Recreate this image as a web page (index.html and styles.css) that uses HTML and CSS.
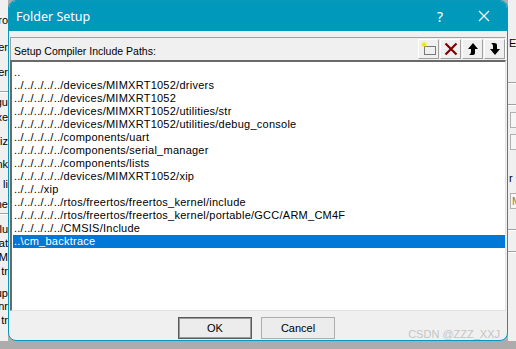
FILE: index.html
```html
<!DOCTYPE html>
<html lang="en">
<head>
  <meta charset="UTF-8">
  <title>Folder Setup</title>
  <link rel="stylesheet" href="styles.css">
</head>
<body>
  <div class="desktop">
    <div class="stage">
      <!-- window behind the dialog, left edge -->
      <div class="behind behind-left">
        <div class="frag" style="margin-top:14px">ro</div>
        <div class="frag" style="margin-top:14px">er</div>
        <div class="frag" style="margin-top:12px">er</div>
        <div class="rule" style="margin-top:12px"></div>
        <div class="frag" style="margin-top:3px">gu</div>
        <div class="frag" style="margin-top:2px">xe</div>
        <div class="frag" style="margin-top:11px">iz</div>
        <div class="frag" style="margin-top:10px">nk</div>
        <div class="frag" style="margin-top:7px">li</div>
        <div class="frag" style="margin-top:7px">ne</div>
        <div class="rule" style="margin-top:2px"></div>
        <div class="frag" style="margin-top:8px">lu</div>
        <div class="frag" style="margin-top:1px">at</div>
        <div class="frag" style="margin-top:1px">M</div>
        <div class="frag" style="margin-top:1px">tr</div>
        <div class="frag" style="margin-top:9px">up</div>
        <div class="frag" style="margin-top:0">nr</div>
        <div class="frag" style="margin-top:1px">tr</div>
      </div>

      <div class="dialog">
        <div class="titlebar">
          <span class="title">Folder Setup</span>
          <span class="help">?</span>
          <span class="close">
            <svg width="12" height="12" viewBox="0 0 12 12"><path d="M1 1 L11 11 M11 1 L1 11" stroke="#fff" stroke-width="1.2"/></svg>
          </span>
        </div>

        <div class="content">
          <div class="list-head">
            <span class="label">Setup Compiler Include Paths:</span>
            <div class="tools">
              <button class="tool" title="New">
                <svg width="16" height="14" viewBox="0 0 16 14">
                  <rect x="3.5" y="4.5" width="11" height="8" fill="none" stroke="#000" stroke-dasharray="1 1"/>
                  <path d="M3 0 V5 M0.5 2.5 H5.5 M1 0.5 L5 4.5 M5 0.5 L1 4.5" stroke="#f0e000" stroke-width="1"/>
                </svg>
              </button>
              <button class="tool" title="Delete">
                <svg width="14" height="14" viewBox="0 0 14 14"><path d="M1.5 1.5 L12.5 12.5 M12.5 1.5 L1.5 12.5" stroke="#800000" stroke-width="2.2"/></svg>
              </button>
              <button class="tool" title="Move Up">
                <svg width="12" height="14" viewBox="0 0 12 14"><path d="M6 1 L11 7 H8 V11 Q8 13 5 13 H2 Q4 12 4 10 V7 H1 Z" fill="#000"/></svg>
              </button>
              <button class="tool" title="Move Down">
                <svg width="12" height="14" viewBox="0 0 12 14"><path d="M6 13 L11 7 H8 V3 Q8 1 5 1 H2 Q4 2 4 4 V7 H1 Z" fill="#000"/></svg>
              </button>
            </div>
          </div>

          <ul class="paths">
            <li>..</li>
            <li>../../../../../devices/MIMXRT1052/drivers</li>
            <li>../../../../../devices/MIMXRT1052</li>
            <li>../../../../../devices/MIMXRT1052/utilities/str</li>
            <li>../../../../../devices/MIMXRT1052/utilities/debug_console</li>
            <li>../../../../../components/uart</li>
            <li>../../../../../components/serial_manager</li>
            <li>../../../../../components/lists</li>
            <li>../../../../../devices/MIMXRT1052/xip</li>
            <li>../../../xip</li>
            <li>../../../../../rtos/freertos/freertos_kernel/include</li>
            <li>../../../../../rtos/freertos/freertos_kernel/portable/GCC/ARM_CM4F</li>
            <li>../../../../../CMSIS/Include</li>
            <li class="selected">..\cm_backtrace</li>
          </ul>

          <div class="actions">
            <button class="btn default">OK</button>
            <button class="btn">Cancel</button>
            <span class="mark">CSDN @ZZZ_XXJ</span>
          </div>
        </div>
      </div>

      <!-- window behind the dialog, right edge -->
      <div class="behind behind-right">
        <div class="box" style="margin-top:37px">E</div>
        <div class="rule" style="margin-top:32px"></div>
        <div class="rule" style="margin-top:20px"></div>
        <div class="field" style="margin-top:6px"></div>
        <div class="field" style="margin-top:6px"></div>
        <div class="frag" style="margin-top:22px">r</div>
        <div class="field" style="margin-top:8px">M</div>
        <div class="rule" style="margin-top:20px"></div>
        <div class="rule" style="margin-top:20px"></div>
      </div>
    </div>
    <div class="floor"></div>
  </div>
</body>
</html>
```

FILE: styles.css
```css
/* Page */
body {
  margin: 0;
  background: #aeaeae;
  font-family: "Liberation Sans", Arial, sans-serif;
}

.desktop {
  width: 516px;
  height: 349px;
  overflow: hidden;
  display: flex;
  flex-direction: column;
}

.stage {
  display: flex;
  height: 341px;
}

.floor {
  flex: 1;
  background: #acacac;
}

/* Window behind the dialog */
.behind {
  width: 8px;
  background: #f0f0f0;
  overflow: hidden;
  display: flex;
  flex-direction: column;
  font-size: 11px;
  line-height: 13px;
  color: #000;
}

.behind-left .frag {
  display: flex;
  justify-content: flex-end;
  white-space: nowrap;
}

.behind-right .frag,
.behind-right .box {
  white-space: nowrap;
  padding-left: 1px;
}

.behind .rule {
  height: 1px;
  background: #a0a0a0;
  border-bottom: 1px solid #fff;
}

.behind-right .field {
  height: 14px;
  border: 1px solid #b0b0b0;
  border-right: 0;
  margin-left: 2px;
  background: #f6f6f6;
  color: #9a7a3a;
  font-size: 11px;
  line-height: 14px;
  padding-left: 1px;
}

/* Dialog */
.dialog {
  width: 498px;
  height: 339px;
  border: 1px solid #0b98b8;
  border-radius: 8px;
  background: #f0f0f0;
  display: flex;
  flex-direction: column;
  overflow: hidden;
}

.titlebar {
  height: 30px;
  background: #0099bb;
  color: #fff;
  display: flex;
  align-items: center;
  font-family: "Noto Sans", "Liberation Sans", sans-serif;
  font-size: 12.5px;
}

.title {
  margin-left: 7px;
  flex: 1;
}

.help {
  width: 42px;
  text-align: center;
  font-size: 14px;
}

.close {
  width: 46px;
  display: flex;
  justify-content: center;
}

.content {
  flex: 1;
  padding: 6px 1px 0 1px;
  display: flex;
  flex-direction: column;
}

/* Header row with the toolbar */
.list-head {
  height: 22px;
  border-top: 1px solid #a0a0a0;
  border-left: 1px solid #a0a0a0;
  border-right: 1px solid #fff;
  display: flex;
  align-items: center;
  font-size: 10.5px;
}

.label {
  flex: 1;
  padding: 4px 0 0 3px;
}

.tools {
  display: flex;
  align-self: flex-start;
  margin-top: 1px;
}

.tool {
  all: unset;
  width: 19px;
  height: 18px;
  display: flex;
  align-items: center;
  justify-content: center;
  border-top: 1px solid #fff;
  border-left: 1px solid #fff;
  border-right: 1px solid #a0a0a0;
  border-bottom: 1px solid #a0a0a0;
  margin-left: 1px;
}

/* Path list */
.paths {
  list-style: none;
  margin: 0;
  padding: 4px 0 0 1px;
  height: 244px;
  background: #fff;
  border-top: 2px solid #6a6a6a;
  border-left: 2px solid #6a6a6a;
  border-right: 1px solid #e3e3e3;
  border-bottom: 1px solid #e3e3e3;
  font-size: 11px;
  letter-spacing: 0.25px;
  line-height: 13px;
  color: #000;
}

.paths li {
  padding-left: 1px;
  white-space: nowrap;
}

.paths li.selected {
  background: #0078d7;
  color: #fff;
}

/* Buttons */
.actions {
  height: 29px;
  display: flex;
  align-items: flex-end;
  padding-left: 168px;
  gap: 9px;
}

.btn {
  all: unset;
  width: 72px;
  height: 20px;
  margin-bottom: 1px;
  text-align: center;
  font-size: 11px;
  line-height: 20px;
  background: #ececec;
  border: 1px solid #adadad;
}

.btn.default {
  border: 1px solid #5a5a5a;
  box-shadow: inset 0 0 0 1px #9a9a9a;
}

.mark {
  margin-left: auto;
  margin-right: 6px;
  margin-bottom: 0;
  font-size: 11px;
  color: #c4c4c4;
}
```
